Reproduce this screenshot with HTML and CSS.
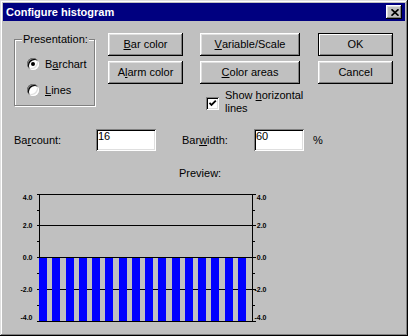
FILE: index.html
```html
<!DOCTYPE html>
<html>
<head>
<meta charset="utf-8">
<link rel="stylesheet" href="styles.css">
</head>
<body>
<div class="window">
  <div class="titlebar">
    <span class="title">Configure histogram</span>
    <span class="close">
      <svg width="8" height="7" viewBox="0 0 8 7"><path d="M0.5 0.3 L7.5 6.7 M7.5 0.3 L0.5 6.7" stroke="#000" stroke-width="1.7" fill="none"/></svg>
    </span>
  </div>
  <div class="body">
    <div class="top">
      <div class="group">
        <span class="legend">Presentation:</span>
        <div class="radio-row"><span class="radio"><span class="dot"></span></span><span>B<u>a</u>rchart</span></div>
        <div class="radio-row"><span class="radio"></span><span><u>L</u>ines</span></div>
      </div>
      <div class="col col1">
        <div class="btn"><u>B</u>ar color</div>
        <div class="btn">A<u>l</u>arm color</div>
      </div>
      <div class="col col2">
        <div class="btn"><u>V</u>ariable/Scale</div>
        <div class="btn"><u>C</u>olor areas</div>
        <div class="check-row">
          <span class="checkbox"><svg width="9" height="9" viewBox="0 0 9 9"><path d="M1.5 3.8 L3.5 6 L7.8 1.6" stroke="#000" stroke-width="1.8" fill="none"/></svg></span>
          <span class="check-label">Show <u>h</u>orizontal lines</span>
        </div>
      </div>
      <div class="col col3">
        <div class="btn default">OK</div>
        <div class="btn">Cancel</div>
      </div>
    </div>
    <div class="row2">
      <span class="lbl lbl1">Ba<u>r</u>count:</span>
      <span class="edit edit1">16</span>
      <span class="lbl lbl2">Bar<u>w</u>idth:</span>
      <span class="edit edit2">60</span>
      <span class="pct">%</span>
    </div>
    <div class="preview-label">Preview:</div>
    <svg class="chart" width="290" height="140" viewBox="3 188 290 140" shape-rendering="crispEdges">
      <g fill="#000">
        <rect x="37" y="194" width="219" height="1"/>
        <rect x="37" y="225" width="219" height="1"/>
        <rect x="37" y="257" width="219" height="1"/>
        <rect x="37" y="289" width="219" height="1"/>
        <rect x="37" y="321" width="219" height="1"/>
        <rect x="39" y="194" width="1" height="128"/>
        <rect x="252" y="194" width="1" height="128"/>
        <rect x="37" y="210" width="2" height="1"/>
        <rect x="37" y="241" width="2" height="1"/>
        <rect x="37" y="273" width="2" height="1"/>
        <rect x="37" y="305" width="2" height="1"/>
        <rect x="253" y="210" width="2" height="1"/>
        <rect x="253" y="241" width="2" height="1"/>
        <rect x="253" y="273" width="2" height="1"/>
        <rect x="253" y="305" width="2" height="1"/>
      </g>
      <g fill="#0000ff">
        <rect x="39" y="258" width="8" height="63"/>
        <rect x="52" y="258" width="8" height="63"/>
        <rect x="66" y="258" width="8" height="63"/>
        <rect x="79" y="258" width="8" height="63"/>
        <rect x="92" y="258" width="8" height="63"/>
        <rect x="105" y="258" width="8" height="63"/>
        <rect x="119" y="258" width="8" height="63"/>
        <rect x="132" y="258" width="8" height="63"/>
        <rect x="145" y="258" width="8" height="63"/>
        <rect x="158" y="258" width="8" height="63"/>
        <rect x="172" y="258" width="8" height="63"/>
        <rect x="185" y="258" width="8" height="63"/>
        <rect x="198" y="258" width="8" height="63"/>
        <rect x="211" y="258" width="8" height="63"/>
        <rect x="225" y="258" width="8" height="63"/>
        <rect x="238" y="258" width="8" height="63"/>
      </g>
      <g class="ticks" text-anchor="end">
        <text x="32.5" y="200">4.0</text>
        <text x="32.5" y="228">2.0</text>
        <text x="32.5" y="260">0.0</text>
        <text x="32.5" y="292">-2.0</text>
        <text x="32.5" y="320">-4.0</text>
        <text x="266.5" y="200">4.0</text>
        <text x="266.5" y="228">2.0</text>
        <text x="266.5" y="260">0.0</text>
        <text x="266.5" y="292">-2.0</text>
        <text x="266.5" y="320">-4.0</text>
      </g>
    </svg>
  </div>
</div>
</body>
</html>
```
FILE: styles.css
```css
html, body {
  margin: 0;
  padding: 0;
  background: #c0c0c0;
}
body {
  font-family: "Liberation Sans", Arial, sans-serif;
  font-size: 11px;
  color: #000;
}
.window {
  width: 408px;
  height: 336px;
  box-sizing: border-box;
  padding: 3px;
  background: #c0c0c0;
  box-shadow: inset -1px -1px #000, inset 1px 1px #dfdfdf, inset -2px -2px #808080, inset 2px 2px #fff;
  overflow: hidden;
}
.titlebar {
  height: 18px;
  background: #000080;
  color: #fff;
  display: flex;
  align-items: center;
  justify-content: space-between;
  padding-left: 3px;
  padding-right: 3px;
}
.title {
  font-weight: bold;
  font-size: 11px;
  line-height: 18px;
}
.close {
  width: 16px;
  height: 14px;
  box-sizing: border-box;
  background: #c0c0c0;
  box-shadow: inset -1px -1px #000, inset 1px 1px #fff, inset -2px -2px #808080, inset 2px 2px #dfdfdf;
  display: flex;
  align-items: center;
  justify-content: center;
  padding-left: 1px;
}
.close svg { display: block; }
.body {
  padding-top: 12px;
}
.top {
  height: 96px;
  display: flex;
  align-items: flex-start;
}
.group {
  position: relative;
  margin-top: 6px;
  margin-left: 11px;
  width: 81px;
  height: 67px;
  box-sizing: border-box;
  border: 1px solid #808080;
  box-shadow: inset 1px 1px #fff, 1px 1px #fff;
  padding: 18px 0 0 12px;
  display: flex;
  flex-direction: column;
  gap: 14px;
}
.legend {
  position: absolute;
  top: -7px;
  left: 7px;
  padding: 0 1px;
  background: #c0c0c0;
  line-height: 13px;
}
.radio-row {
  display: flex;
  align-items: center;
  height: 12px;
  line-height: 13px;
}
.radio {
  width: 12px;
  height: 12px;
  flex: none;
  border-radius: 50%;
  background: #fff;
  box-shadow: inset 1px 1px #808080, inset -1px -1px #fff, inset 2px 2px #000, inset -2px -2px #dfdfdf;
  margin-right: 6px;
  display: flex;
  align-items: center;
  justify-content: center;
}
.dot {
  width: 4px;
  height: 4px;
  border-radius: 50%;
  background: #000;
}
.col {
  display: flex;
  flex-direction: column;
  gap: 5px;
}
.col1 { margin-left: 13px; width: 75px; }
.col2 { margin-left: 17px; width: 100px; }
.col3 { margin-left: 18px; width: 75px; }
.btn {
  height: 23px;
  box-sizing: border-box;
  background: #c0c0c0;
  box-shadow: inset -1px -1px #000, inset 1px 1px #fff, inset -2px -2px #808080, inset 2px 2px #dfdfdf;
  display: flex;
  align-items: center;
  justify-content: center;
  line-height: 13px;
  padding-bottom: 1px;
}
.btn.default {
  border: 1px solid #000;
  box-shadow: inset 1px 1px #fff, inset -1px -1px #808080;
}
.check-row {
  display: flex;
  align-items: center;
  padding-left: 6px;
}
.checkbox {
  width: 13px;
  height: 13px;
  flex: none;
  box-sizing: border-box;
  background: #fff;
  box-shadow: inset 1px 1px #808080, inset -1px -1px #fff, inset 2px 2px #000, inset -2px -2px #dfdfdf;
  display: flex;
  align-items: center;
  justify-content: center;
  margin-right: 6px;
  margin-top: 2px;
}
.checkbox svg { display: block; }
.check-label {
  width: 90px;
  flex: none;
  line-height: 13px;
}
.row2 {
  display: flex;
  align-items: center;
  height: 22px;
  padding-left: 11px;
}
.lbl { line-height: 13px; }
.lbl1 { width: 82px; }
.lbl2 { width: 72px; margin-left: 26px; }
.edit {
  height: 22px;
  box-sizing: border-box;
  background: #fff;
  box-shadow: inset 1px 1px #808080, inset -1px -1px #fff, inset 2px 2px #000, inset -2px -2px #dfdfdf;
  padding: 2px 2px 0 2px;
  line-height: 11px;
}
.edit1 { width: 60px; }
.edit2 { width: 50px; }
.pct { margin-left: 9px; line-height: 13px; }
.preview-label {
  margin-top: 16px;
  padding-left: 176px;
  line-height: 13px;
}
.chart {
  display: block;
  margin-top: 8px;
}
.ticks {
  font-family: "Liberation Sans", Arial, sans-serif;
  font-size: 7px;
  font-weight: bold;
  fill: #000;
}
```
